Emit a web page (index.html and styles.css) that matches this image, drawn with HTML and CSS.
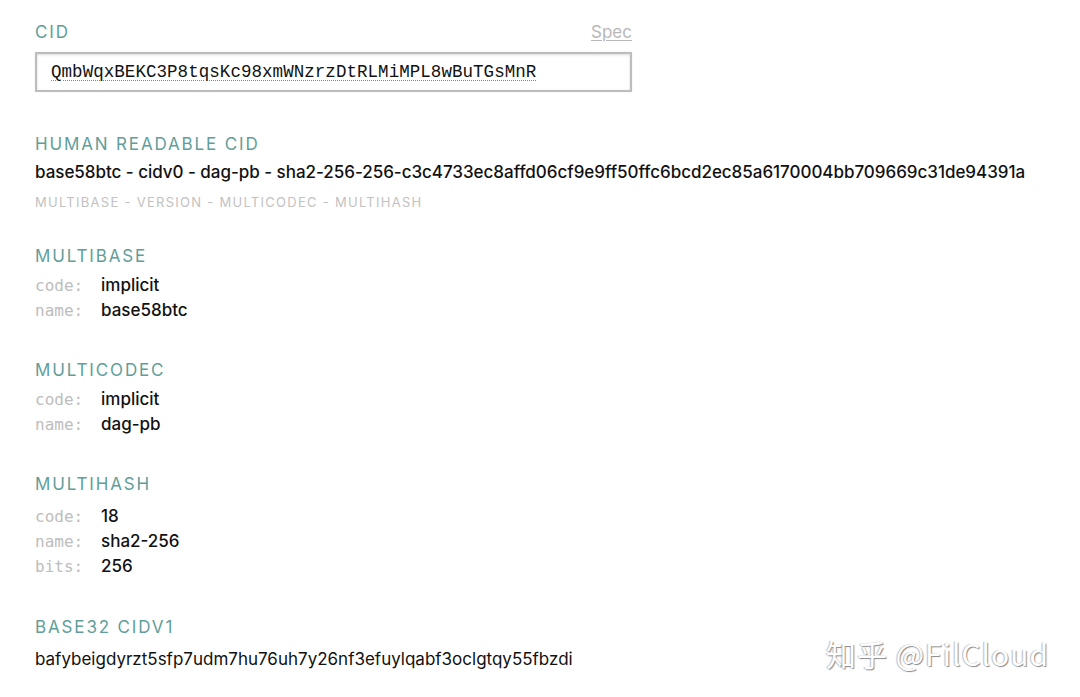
FILE: index.html
```html
<!DOCTYPE html>
<html>
<head>
<meta charset="utf-8">
<link rel="stylesheet" href="styles.css">
</head>
<body>
<main class="page">
  <section class="cid-block">
    <div class="cid-head">
      <h2 class="heading">CID</h2>
      <a class="spec" href="#">Spec</a>
    </div>
    <div class="cid-input"><span class="cid-text">QmbWqxBEKC3P8tqsKc98xmWNzrzDtRLMiMPL8wBuTGsMnR</span></div>
  </section>

  <section class="human">
    <h2 class="heading">HUMAN READABLE CID</h2>
    <div class="human-value">base58btc - cidv0 - dag-pb - sha2-256-256-c3c4733ec8affd06cf9e9ff50ffc6bcd2ec85a6170004bb709669c31de94391a</div>
    <div class="human-legend">MULTIBASE - VERSION - MULTICODEC - MULTIHASH</div>
  </section>

  <section class="group">
    <h2 class="heading">MULTIBASE</h2>
    <div class="row"><span class="label">code:</span><span class="value">implicit</span></div>
    <div class="row"><span class="label">name:</span><span class="value">base58btc</span></div>
  </section>

  <section class="group">
    <h2 class="heading">MULTICODEC</h2>
    <div class="row"><span class="label">code:</span><span class="value">implicit</span></div>
    <div class="row"><span class="label">name:</span><span class="value">dag-pb</span></div>
  </section>

  <section class="group group-hash">
    <h2 class="heading">MULTIHASH</h2>
    <div class="row"><span class="label">code:</span><span class="value">18</span></div>
    <div class="row"><span class="label">name:</span><span class="value">sha2-256</span></div>
    <div class="row"><span class="label">bits:</span><span class="value">256</span></div>
  </section>

  <section class="group group-b32">
    <h2 class="heading">BASE32 CIDV1</h2>
    <div class="b32-value">bafybeigdyrzt5sfp7udm7hu76uh7y26nf3efuylqabf3oclgtqy55fbzdi</div>
  </section>
</main>
<div class="watermark">知乎 @FilCloud</div>
</body>
</html>
```

FILE: styles.css
```css
html, body {
  margin: 0;
  padding: 0;
  background: #ffffff;
}
body {
  width: 1080px;
  height: 697px;
  overflow: hidden;
  position: relative;
  font-family: Inter, "Noto Sans", sans-serif;
  color: #111111;
}
.page {
  padding: 22px 0 0 35px;
  display: flex;
  flex-direction: column;
}
.heading {
  margin: 0;
  font-family: Inter, "Noto Sans", sans-serif;
  font-weight: 400;
  font-size: 17px;
  line-height: 20px;
  letter-spacing: 1.85px;
  color: #5f9e9a;
}
.cid-head {
  width: 597px;
  display: flex;
  justify-content: space-between;
  align-items: center;
}
.spec {
  font-size: 17px;
  line-height: 20px;
  color: #b8b8b8;
  text-decoration: underline;
  text-underline-offset: 2px;
}
.cid-input {
  margin-top: 10px;
  height: 36px;
  border: 2px solid #bdbdbd;
  box-shadow: inset 0 1px 3px rgba(0,0,0,0.14), 0 0 1px rgba(0,0,0,0.15);
  display: flex;
  align-items: center;
  padding-left: 14px;
  box-sizing: content-box;
  width: 579px;
}
.cid-text {
  font-family: "Liberation Mono", monospace;
  font-size: 17.5px;
  letter-spacing: 0.05px;
  color: #111;
  text-decoration: underline dotted #e06060;
  text-decoration-thickness: 1px;
  text-underline-offset: 3px;
}
.human {
  margin-top: 42px;
}
.human-value {
  margin-top: 8px;
  font-size: 17px;
  font-weight: 500;
  line-height: 20px;
  color: #111;
  letter-spacing: -0.03px;
}
.human-legend {
  margin-top: 13px;
  font-size: 13px;
  line-height: 15px;
  letter-spacing: 1.28px;
  color: #c2c2c2;
}
.group {
  margin-top: 36px;
}
.group + .group {
  margin-top: 37px;
}
.group .heading {
  margin-bottom: 7px;
}
.row {
  display: flex;
  align-items: baseline;
  height: 25px;
  line-height: 25px;
}
.label {
  width: 66px;
  font-family: "DejaVu Sans Mono", monospace;
  font-size: 16px;
  color: #bdbdbd;
  letter-spacing: 0;
}
.value {
  font-size: 17px;
  font-weight: 500;
  color: #111;
}
.group-hash .heading {
  margin-bottom: 10px;
}
.group.group-b32 {
  margin-top: 38px;
}
.b32-value {
  margin-top: 12px;
  font-size: 17px;
  font-weight: 400;
  line-height: 20px;
  color: #111;
}
.watermark {
  position: absolute;
  left: 826px;
  top: 631px;
  font-family: "Noto Sans CJK SC", "Noto Sans", sans-serif;
  font-size: 30px;
  color: #ffffff;
  text-shadow: 1px 1px 1px #8a8a8a, -1px 0 1px #bcbcbc;
  letter-spacing: 1px;
}
```
